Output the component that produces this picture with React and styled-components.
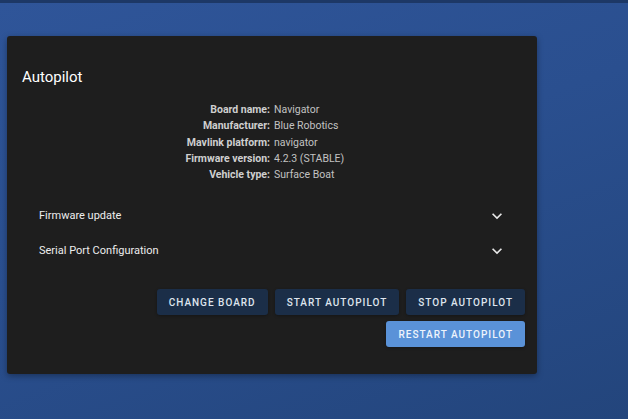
import { Fragment } from "react";
import styled, { createGlobalStyle } from "styled-components";

const GlobalStyle = createGlobalStyle`
    html, body {
        margin: 0;
        padding: 0;
        width: 628px;
        height: 419px;
        overflow: hidden;
        font-family: Roboto, "Liberation Sans", sans-serif;
    }
`;

const Page = styled.div`
    width: 628px;
    height: 419px;
    box-sizing: border-box;
    padding: 36px 0 0 7px;
    background: linear-gradient(160deg, #2f5599 0%, #2a4f8f 45%, #23457c 100%);
    border-top: 3px solid #1d3866;
`;

const Card = styled.div`
    width: 530px;
    height: 338px;
    margin-top: -3px;
    box-sizing: border-box;
    background: #1e1e1e;
    border-radius: 3px;
    padding: 31px 0 0 0;
    box-shadow: 0 2px 6px rgba(0, 0, 0, 0.35);
    display: flex;
    flex-direction: column;
`;

const Title = styled.h2`
    margin: 0;
    padding: 0 15px;
    font-size: 15px;
    font-weight: 400;
    line-height: 20px;
    color: #ffffff;
`;

const InfoGrid = styled.div`
    display: grid;
    grid-template-columns: 1fr 1fr;
    column-gap: 4px;
    margin-top: 15px;
    font-size: 10.5px;
    line-height: 16.3px;
`;

const Label = styled.span`
    text-align: right;
    font-weight: 700;
    color: #cfcfcf;
`;

const Value = styled.span`
    text-align: left;
    color: #c2c2c2;
`;

const Panels = styled.div`
    margin: 15px 16px 0 16px;
    display: flex;
    flex-direction: column;
`;

const PanelHeader = styled.div`
    height: 35px;
    display: flex;
    align-items: center;
    justify-content: space-between;
    padding: 0 14px 0 16px;
    font-size: 11px;
    color: #ededed;
`;

const Actions = styled.div`
    margin: 21px 12px 0 0;
    display: flex;
    flex-wrap: wrap;
    justify-content: flex-end;
    gap: 6px 7px;
    width: 375px;
    align-self: flex-end;
`;

const Button = styled.button`
    height: 26px;
    padding: 0 12px;
    border: none;
    border-radius: 3px;
    background: ${(p) => (p.$primary ? "#5a92d8" : "#1b2e48")};
    color: ${(p) => (p.$primary ? "#eef4fc" : "#dfe5ee")};
    font-family: Roboto, "Liberation Sans", sans-serif;
    font-size: 10px;
    font-weight: 500;
    letter-spacing: 1px;
    text-transform: uppercase;
    box-shadow: 0 1px 3px rgba(0, 0, 0, 0.3);
    cursor: pointer;
`;

const Chevron = () => (
    <svg width="20" height="20" viewBox="0 0 24 24" fill="#e8e8e8">
        <path d="M7.41 8.58 12 13.17l4.59-4.59L18 10l-6 6-6-6 1.41-1.42z" />
    </svg>
);

const info = [
    ["Board name:", "Navigator"],
    ["Manufacturer:", "Blue Robotics"],
    ["Mavlink platform:", "navigator"],
    ["Firmware version:", "4.2.3 (STABLE)"],
    ["Vehicle type:", "Surface Boat"],
];

function App() {
    return (
        <>
            <GlobalStyle />
            <Page>
                <Card>
                    <Title>Autopilot</Title>
                    <InfoGrid>
                        {info.map(([label, value]) => (
                            <Fragment key={label}>
                                <Label>{label}</Label>
                                <Value>{value}</Value>
                            </Fragment>
                        ))}
                    </InfoGrid>
                    <Panels>
                        <PanelHeader>
                            Firmware update
                            <Chevron />
                        </PanelHeader>
                        <PanelHeader>
                            Serial Port Configuration
                            <Chevron />
                        </PanelHeader>
                    </Panels>
                    <Actions>
                        <Button>Change board</Button>
                        <Button>Start autopilot</Button>
                        <Button>Stop autopilot</Button>
                        <Button $primary>Restart autopilot</Button>
                    </Actions>
                </Card>
            </Page>
        </>
    );
}

export default App;
